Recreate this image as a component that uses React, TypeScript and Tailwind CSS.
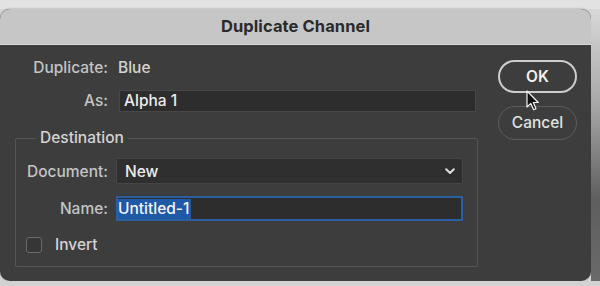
import React from "react";

export default function App() {
  const font = { fontFamily: "Inter, 'Liberation Sans', sans-serif" };
  return (
    <div className="w-[600px] h-[286px] flex flex-col bg-[#d6d6d6] overflow-hidden" style={font}>
      <div className="h-[9px] bg-[#e2e2e2]" />
      <div className="flex h-[272px]">
        <div className="w-[591px] h-[272px] rounded-[10px] overflow-hidden flex flex-col bg-[#3d3d3d] shadow-[0_0_2px_rgba(0,0,0,0.4)]">
          {/* Title bar */}
          <div className="h-[36px] bg-[#c6c6c6] flex items-center justify-center border-b border-[#d9d9d9]">
            <span className="text-[16.5px] font-bold text-[#2a2a2a] tracking-[0.1px]">Duplicate Channel</span>
          </div>
          {/* Body */}
          <div className="flex flex-1 text-[15.5px] font-medium">
            <div className="w-[478px] pl-[15px] pt-[13px]">
              <div className="flex items-center h-[20px]">
                <span className="w-[93px] text-right text-[#c4c4c4]">Duplicate:</span>
                <span className="ml-[10px] text-[#d4d4d4]">Blue</span>
              </div>
              <div className="flex items-center mt-[11px]">
                <span className="w-[93px] text-right text-[#c4c4c4]">As:</span>
                <div className="ml-[11px] w-[357px] h-[22px] bg-[#2d2d2d] border border-[#474747] flex items-center pl-[4px] text-[#ececec]">
                  Alpha 1
                </div>
              </div>
              <fieldset className="mt-[17px] w-[463px] h-[138px] border border-[#555555] rounded-[2px]">
                <legend className="ml-[20px] px-[4px] text-[#d4d4d4] leading-[18px]">Destination</legend>
                <div className="pt-[11px]">
                  <div className="flex items-center">
                    <span className="w-[92px] text-right text-[#c4c4c4]">Document:</span>
                    <div className="ml-[8px] w-[347px] h-[26px] bg-[#2f2f2f] border border-[#454545] rounded-[2px] flex items-center justify-between pl-[8px] pr-[7px] text-[#ececec]">
                      <span>New</span>
                      <svg width="10" height="7" viewBox="0 0 10 7">
                        <path d="M1.2 1.2 L5 5 L8.8 1.2" fill="none" stroke="#dcdcdc" strokeWidth="2" strokeLinecap="round" strokeLinejoin="round" />
                      </svg>
                    </div>
                  </div>
                  <div className="flex items-center mt-[12px]">
                    <span className="w-[92px] text-right text-[#c4c4c4]">Name:</span>
                    <div className="ml-[8px] w-[347px] h-[25px] bg-[#2d2d2d] border-2 border-[#2b5f9f] flex items-center pl-[0px]">
                      <span className="bg-[#1e5aa8] text-[#f2f2f2] h-[20px] flex items-center pr-[2px]">Untitled-1</span>
                    </div>
                  </div>
                  <div className="flex items-center mt-[12px] pl-[10px]">
                    <div className="w-[16px] h-[16px] rounded-[3px] border border-[#6a6a6a] bg-[#363636]" />
                    <span className="ml-[13px] text-[#d4d4d4]">Invert</span>
                  </div>
                </div>
              </fieldset>
            </div>
            <div className="ml-[20px] pt-[15px] flex flex-col relative">
              <div className="w-[79px] h-[33px] rounded-full border-2 border-[#cdcdcd] flex items-center justify-center text-[#f0f0f0] font-semibold">
                OK
              </div>
              <div className="mt-[13px] w-[79px] h-[34px] rounded-full border-[1.5px] border-[#5c5c5c] flex items-center justify-center text-[#e2e2e2] font-medium">
                Cancel
              </div>
              <svg className="absolute left-[28px] top-[45px]" width="14" height="22" viewBox="0 0 14 22">
                <path d="M1 1 L1 17 L4.8 13.4 L7.6 19.8 L10 18.8 L7.3 12.5 L12.3 12.5 Z" fill="#111" stroke="#f2f2f2" strokeWidth="1.2" strokeLinejoin="round" />
              </svg>
            </div>
          </div>
        </div>
        <div className="flex-1 bg-[linear-gradient(180deg,#d8d8d8_0%,#a8a8a8_35%,#5e5e5e_70%,#6a6a6a_100%)]" />
      </div>
      <div className="flex-1 bg-[#d2d2d2]" />
    </div>
  );
}
